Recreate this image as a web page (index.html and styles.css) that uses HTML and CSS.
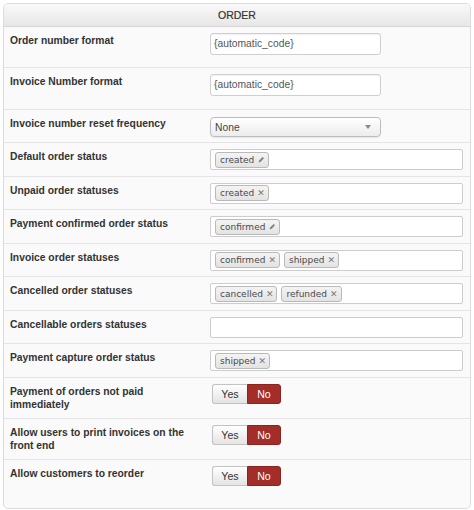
FILE: index.html
```html
<!DOCTYPE html>
<html>
<head>
<meta charset="utf-8">
<link rel="stylesheet" href="styles.css">
</head>
<body>
<div class="panel">
  <div class="panel-head">ORDER</div>

  <div class="row row-text">
    <div class="label">Order number format</div>
    <div class="field"><div class="text-input">{automatic_code}</div></div>
  </div>
  <div class="row row-text2">
    <div class="label">Invoice Number format</div>
    <div class="field"><div class="text-input">{automatic_code}</div></div>
  </div>
  <div class="row row-select">
    <div class="label">Invoice number reset frequency</div>
    <div class="field field-select"><div class="select"><span>None</span><span class="caret"></span></div></div>
  </div>

  <div class="row row-tags">
    <div class="label">Default order status</div>
    <div class="field"><div class="tag-input">
      <span class="tag">created<svg class="pencil" width="7" height="7" viewBox="0 0 7 7"><path d="M0.8 6.2 L1.1 4.6 L4.7 1 L6 2.3 L2.4 5.9 Z" fill="#808080"/></svg></span>
    </div></div>
  </div>
  <div class="row row-tags">
    <div class="label">Unpaid order statuses</div>
    <div class="field"><div class="tag-input">
      <span class="tag">created<span class="x">✕</span></span>
    </div></div>
  </div>
  <div class="row row-tags">
    <div class="label">Payment confirmed order status</div>
    <div class="field"><div class="tag-input">
      <span class="tag">confirmed<svg class="pencil" width="7" height="7" viewBox="0 0 7 7"><path d="M0.8 6.2 L1.1 4.6 L4.7 1 L6 2.3 L2.4 5.9 Z" fill="#808080"/></svg></span>
    </div></div>
  </div>
  <div class="row row-tags">
    <div class="label">Invoice order statuses</div>
    <div class="field"><div class="tag-input">
      <span class="tag">confirmed<span class="x">✕</span></span>
      <span class="tag">shipped<span class="x">✕</span></span>
    </div></div>
  </div>
  <div class="row row-tags">
    <div class="label">Cancelled order statuses</div>
    <div class="field"><div class="tag-input">
      <span class="tag">cancelled<span class="x">✕</span></span>
      <span class="tag">refunded<span class="x">✕</span></span>
    </div></div>
  </div>
  <div class="row row-tags">
    <div class="label">Cancellable orders statuses</div>
    <div class="field"><div class="tag-input"></div></div>
  </div>
  <div class="row row-tags">
    <div class="label">Payment capture order status</div>
    <div class="field"><div class="tag-input">
      <span class="tag">shipped<span class="x">✕</span></span>
    </div></div>
  </div>

  <div class="row row-toggle">
    <div class="label">Payment of orders not paid immediately</div>
    <div class="field"><div class="toggle"><span class="opt yes">Yes</span><span class="opt no">No</span></div></div>
  </div>
  <div class="row row-toggle">
    <div class="label">Allow users to print invoices on the front end</div>
    <div class="field"><div class="toggle"><span class="opt yes">Yes</span><span class="opt no">No</span></div></div>
  </div>
  <div class="row row-toggle row-last">
    <div class="label">Allow customers to reorder</div>
    <div class="field"><div class="toggle"><span class="opt yes">Yes</span><span class="opt no">No</span></div></div>
  </div>
</div>
</body>
</html>
```

FILE: styles.css
```css
* { box-sizing: border-box; }
html, body { margin: 0; padding: 0; background: #ffffff; }
body { font-family: "Liberation Sans", Arial, sans-serif; color: #333; }

.panel {
  margin: 3px 0 0 3px;
  width: 468px;
  height: 506px;
  border: 1px solid #dcdcdc;
  border-radius: 5px;
  background: #fafafa;
  overflow: hidden;
}

.panel-head {
  height: 23px;
  border-bottom: 1px solid #d6d6d6;
  background: linear-gradient(#f9f9f9, #e7e7e7);
  text-align: center;
  font-size: 10.5px;
  line-height: 22px;
  color: #333;
  -webkit-text-stroke: 0.2px #333;
}

.row {
  display: grid;
  grid-template-columns: 200px 1fr;
  padding-left: 6px;
  border-bottom: 1px solid #e4e4e4;
}
.row-text { height: 41px; }
.row-text2 { height: 42px; }
.row-select { height: 33px; }
.row-tags { height: 33.57px; }
.row-toggle { height: 41px; }
.row-last { border-bottom: none; height: 48px; }

.label {
  padding-top: 7px;
  font-weight: bold;
  font-size: 10.3px;
  line-height: 13px;
  color: #333;
  padding-right: 14px;
}

.field { padding-top: 6px; }
.field-select { padding-top: 7px; }

.text-input {
  width: 171px;
  height: 22px;
  border: 1px solid #cfcfcf;
  border-radius: 3px;
  background: #fff;
  box-shadow: inset 0 1px 1px rgba(0,0,0,0.06);
  font-size: 10.3px;
  line-height: 20px;
  padding-left: 3px;
  color: #555;
}

.select {
  width: 171px;
  height: 20px;
  border: 1px solid #bdbdbd;
  border-radius: 4px;
  background: linear-gradient(#ffffff, #ececec);
  box-shadow: 0 1px 1px rgba(0,0,0,0.08);
  display: flex;
  align-items: center;
  justify-content: space-between;
  padding: 0 9px 0 4px;
  font-size: 10.3px;
  color: #444;
}
.caret {
  width: 0; height: 0;
  border-left: 3px solid transparent;
  border-right: 3px solid transparent;
  border-top: 4px solid #888;
}

.tag-input {
  width: 253px;
  height: 21px;
  border: 1px solid #cdcdcd;
  border-radius: 2px;
  background: #fff;
  display: flex;
  align-items: center;
  gap: 4px;
  padding-left: 4px;
}
.tag {
  display: inline-flex;
  align-items: center;
  height: 16px;
  padding: 0 3px 0 4px;
  border: 1px solid #b9b9b9;
  border-radius: 3px;
  background: linear-gradient(#f4f4f4, #e3e3e3);
  font-family: "DejaVu Sans", Verdana, sans-serif;
  font-size: 9px;
  color: #4a4a4a;
}
.tag .x {
  margin-left: 3px;
  font-size: 9px;
  color: #7a7a7a;
}
.tag .pencil { margin-left: 4px; }

.toggle {
  display: flex;
  margin-left: 2px;
  height: 20px;
}
.opt {
  display: flex;
  align-items: center;
  justify-content: center;
  height: 20px;
  font-size: 10.6px;
}
.yes {
  width: 35px;
  border: 1px solid #c2c2c2;
  border-right: none;
  border-radius: 3px 0 0 3px;
  background: linear-gradient(#ffffff, #e4e4e4);
  color: #333;
}
.no {
  width: 34px;
  border: 1px solid #8b231f;
  border-radius: 0 3px 3px 0;
  background: #a22d29;
  color: #fff;
}
```
